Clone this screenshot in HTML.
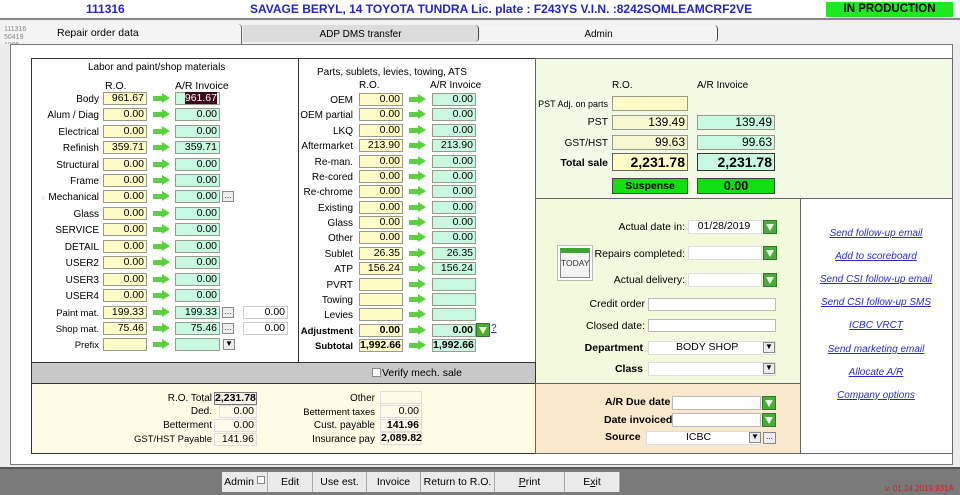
<!DOCTYPE html>
<html><head><meta charset="utf-8">
<style>
*{box-sizing:border-box;margin:0;padding:0}
body{width:960px;height:495px;overflow:hidden;background:#fff;font-family:"Liberation Sans",Arial,sans-serif;font-size:10px;color:#000;position:relative}
.a{position:absolute}
.l{position:absolute;text-align:right;white-space:nowrap;font-size:10px;line-height:13px;padding-top:1px}
.i{position:absolute;height:13px;border:1px solid #9a9a8a;font-size:10.5px;line-height:11px;text-align:right;padding-right:2px;white-space:nowrap}
.y{background:#fffcc8}
.g{background:#c8f8e0}
.w{background:#fff}
.ar{position:absolute;width:18px;height:11px}
.ar:before{content:"";position:absolute;left:0;top:3px;width:9px;height:5px;background:#5bd040}
.ar:after{content:"";position:absolute;left:9px;top:0;border-left:8px solid #5bd040;border-top:5.5px solid transparent;border-bottom:5.5px solid transparent}
.dd{position:absolute;width:14px;height:14px;background:#4caa3c;border:1px solid #2e7a24}
.dd:after{content:"";position:absolute;left:2px;top:3px;border-top:7px solid #e8ffe0;border-left:4px solid transparent;border-right:4px solid transparent}
.sb{position:absolute;width:12px;height:11px;background:#eee;border:1px solid #888;font-size:8px;line-height:8px;text-align:center}
.lk{position:absolute;left:800px;width:152px;text-align:center;color:#2a2ac8;text-decoration:underline;font-style:italic;font-size:10px}
.bt{position:absolute;top:472px;height:20px;background:#eaeaea;border-right:1px solid #aaa;font-size:10.5px;line-height:20px;text-align:center}
b{font-weight:bold}
</style></head><body>
<!-- header -->
<div class="a" style="left:0;top:0;width:960px;height:20px;background:#fff;border-bottom:2px solid #888"></div>
<div class="a" style="left:86px;top:2px;font-size:12px;font-weight:bold;color:#2424c8">111316</div>
<div class="a" style="left:250px;top:2px;font-size:12px;font-weight:bold;color:#2424c8;white-space:nowrap">SAVAGE BERYL, 14 TOYOTA TUNDRA Lic. plate : F243YS V.I.N. :8242SOMLEAMCRF2VE</div>
<div class="a" style="left:826px;top:2px;width:127px;height:15px;background:#1ee81e;text-align:center;font-size:11.5px;font-weight:bold;line-height:15px">IN PRODUCTION</div>
<!-- tabs -->
<div class="a" style="left:0;top:20px;width:960px;height:24px;background:#f0f0f0"></div>
<div class="a" style="left:2px;top:24px;width:240px;height:22px;background:#f4f4f4;border-right:1px solid #666;border-radius:0 4px 0 0"></div>
<div class="a" style="left:243px;top:25px;width:236px;height:17px;background:#dcdcdc;border-right:1px solid #444;border-radius:0 4px 4px 0;text-align:center;font-size:10px;line-height:17px;padding-top:1px">ADP DMS transfer</div>
<div class="a" style="left:480px;top:25px;width:238px;height:17px;background:#f4f4f4;border-right:1px solid #444;border-radius:0 4px 4px 0;text-align:center;font-size:10px;line-height:17px;padding-top:1px">Admin</div>
<div class="a" style="left:57px;top:27px;font-size:10.5px">Repair order data</div>
<div class="a" style="left:4px;top:26px;font-size:7px;line-height:8px;color:#888">111316<br>50419<br>1905</div>
<!-- main frame -->
<div class="a" style="left:0;top:44px;width:960px;height:423px;background:#ececec"></div>
<div class="a" style="left:10px;top:44px;width:943px;height:421px;background:#fff;border:1px solid #777"></div>
<!-- section boxes -->
<div class="a" style="left:31px;top:58px;width:268px;height:305px;border:1px solid #333;background:#fff"></div>
<div class="a" style="left:298px;top:58px;width:238px;height:305px;border:1px solid #333;background:#fff"></div>
<div class="a" style="left:535px;top:58px;width:418px;height:141px;border:1px solid #666;background:#f2f9e4"></div>
<div class="a" style="left:535px;top:198px;width:266px;height:186px;border:1px solid #666;background:#f2f9dc"></div>
<div class="a" style="left:800px;top:198px;width:153px;height:256px;border:1px solid #666;background:#fff"></div>
<div class="a" style="left:31px;top:362px;width:505px;height:22px;border:1px solid #333;background:#c8c8c8"></div>
<div class="a" style="left:31px;top:383px;width:505px;height:71px;border:1px solid #333;background:#fffbe4"></div>
<div class="a" style="left:535px;top:383px;width:266px;height:71px;border:1px solid #666;background:#fae8cc"></div>

<!-- left section -->
<div class="a" style="left:88px;top:62px;font-size:10px">Labor and paint/shop materials</div>
<div class="a" style="left:105px;top:80px;font-size:10.5px">R.O.</div>
<div class="a" style="left:175px;top:80px;font-size:10.5px">A/R Invoice</div>

<div class="l" style="left:20px;width:79px;top:92px">Body</div><div class="i y" style="left:103px;top:92px;width:44px">961.67</div><div class="ar" style="left:153px;top:93px"></div><div class="i g" style="left:175px;top:92px;width:45px"><span style="background:#3a0a1a;color:#fff">961.67</span></div>
<div class="l" style="left:20px;width:79px;top:108px">Alum / Diag</div><div class="i y" style="left:103px;top:108px;width:44px">0.00</div><div class="ar" style="left:153px;top:109px"></div><div class="i g" style="left:175px;top:108px;width:45px">0.00</div>
<div class="l" style="left:20px;width:79px;top:125px">Electrical</div><div class="i y" style="left:103px;top:125px;width:44px">0.00</div><div class="ar" style="left:153px;top:126px"></div><div class="i g" style="left:175px;top:125px;width:45px">0.00</div>
<div class="l" style="left:20px;width:79px;top:141px">Refinish</div><div class="i y" style="left:103px;top:141px;width:44px">359.71</div><div class="ar" style="left:153px;top:142px"></div><div class="i g" style="left:175px;top:141px;width:45px">359.71</div>
<div class="l" style="left:20px;width:79px;top:158px">Structural</div><div class="i y" style="left:103px;top:158px;width:44px">0.00</div><div class="ar" style="left:153px;top:159px"></div><div class="i g" style="left:175px;top:158px;width:45px">0.00</div>
<div class="l" style="left:20px;width:79px;top:174px">Frame</div><div class="i y" style="left:103px;top:174px;width:44px">0.00</div><div class="ar" style="left:153px;top:175px"></div><div class="i g" style="left:175px;top:174px;width:45px">0.00</div>
<div class="l" style="left:20px;width:79px;top:190px"><span style="color:#aaa;font-size:7px">&#9675;</span> Mechanical</div><div class="i y" style="left:103px;top:190px;width:44px">0.00</div><div class="ar" style="left:153px;top:191px"></div><div class="i g" style="left:175px;top:190px;width:45px">0.00</div><div class="sb" style="left:222px;top:191px">...</div>
<div class="l" style="left:20px;width:79px;top:207px">Glass</div><div class="i y" style="left:103px;top:207px;width:44px">0.00</div><div class="ar" style="left:153px;top:208px"></div><div class="i g" style="left:175px;top:207px;width:45px">0.00</div>
<div class="l" style="left:20px;width:79px;top:223px">SERVICE</div><div class="i y" style="left:103px;top:223px;width:44px">0.00</div><div class="ar" style="left:153px;top:224px"></div><div class="i g" style="left:175px;top:223px;width:45px">0.00</div>
<div class="l" style="left:20px;width:79px;top:240px">DETAIL</div><div class="i y" style="left:103px;top:240px;width:44px">0.00</div><div class="ar" style="left:153px;top:241px"></div><div class="i g" style="left:175px;top:240px;width:45px">0.00</div>
<div class="l" style="left:20px;width:79px;top:256px">USER2</div><div class="i y" style="left:103px;top:256px;width:44px">0.00</div><div class="ar" style="left:153px;top:257px"></div><div class="i g" style="left:175px;top:256px;width:45px">0.00</div>
<div class="l" style="left:20px;width:79px;top:273px">USER3</div><div class="i y" style="left:103px;top:273px;width:44px">0.00</div><div class="ar" style="left:153px;top:274px"></div><div class="i g" style="left:175px;top:273px;width:45px">0.00</div>
<div class="l" style="left:20px;width:79px;top:289px">USER4</div><div class="i y" style="left:103px;top:289px;width:44px">0.00</div><div class="ar" style="left:153px;top:290px"></div><div class="i g" style="left:175px;top:289px;width:45px">0.00</div>
<div class="l" style="left:20px;width:79px;top:306px;font-size:9.5px">Paint mat.</div><div class="i y" style="left:103px;top:306px;width:44px">199.33</div><div class="ar" style="left:153px;top:307px"></div><div class="i g" style="left:175px;top:306px;width:45px">199.33</div><div class="sb" style="left:222px;top:307px">...</div><div class="i w" style="left:243px;top:306px;width:45px;border-color:#ccc">0.00</div>
<div class="l" style="left:20px;width:79px;top:322px;font-size:9.5px">Shop mat.</div><div class="i y" style="left:103px;top:322px;width:44px">75.46</div><div class="ar" style="left:153px;top:323px"></div><div class="i g" style="left:175px;top:322px;width:45px">75.46</div><div class="sb" style="left:222px;top:323px">...</div><div class="i w" style="left:243px;top:322px;width:45px;border-color:#ccc">0.00</div>
<div class="l" style="left:20px;width:79px;top:338px;font-size:9.5px">Prefix</div><div class="i y" style="left:103px;top:338px;width:44px"></div><div class="ar" style="left:153px;top:339px"></div><div class="i g" style="left:175px;top:338px;width:45px"></div><div class="sb" style="left:223px;top:339px">&#9660;</div>

<!-- middle section -->
<div class="a" style="left:317px;top:67px;font-size:10px">Parts, sublets, levies, towing, ATS</div>
<div class="a" style="left:359px;top:80px;font-size:10px">R.O.</div>
<div class="a" style="left:430px;top:80px;font-size:10px">A/R Invoice</div>

<div class="l" style="left:290px;width:63px;top:93px">OEM</div><div class="i y" style="left:359px;top:93px;width:44px">0.00</div><div class="ar" style="left:409px;top:94px"></div><div class="i g" style="left:432px;top:93px;width:44px">0.00</div>
<div class="l" style="left:290px;width:63px;top:108px">OEM partial</div><div class="i y" style="left:359px;top:108px;width:44px">0.00</div><div class="ar" style="left:409px;top:109px"></div><div class="i g" style="left:432px;top:108px;width:44px">0.00</div>
<div class="l" style="left:290px;width:63px;top:124px">LKQ</div><div class="i y" style="left:359px;top:124px;width:44px">0.00</div><div class="ar" style="left:409px;top:125px"></div><div class="i g" style="left:432px;top:124px;width:44px">0.00</div>
<div class="l" style="left:290px;width:63px;top:139px">Aftermarket</div><div class="i y" style="left:359px;top:139px;width:44px">213.90</div><div class="ar" style="left:409px;top:140px"></div><div class="i g" style="left:432px;top:139px;width:44px">213.90</div>
<div class="l" style="left:290px;width:63px;top:155px">Re-man.</div><div class="i y" style="left:359px;top:155px;width:44px">0.00</div><div class="ar" style="left:409px;top:156px"></div><div class="i g" style="left:432px;top:155px;width:44px">0.00</div>
<div class="l" style="left:290px;width:63px;top:170px">Re-cored</div><div class="i y" style="left:359px;top:170px;width:44px">0.00</div><div class="ar" style="left:409px;top:171px"></div><div class="i g" style="left:432px;top:170px;width:44px">0.00</div>
<div class="l" style="left:290px;width:63px;top:185px">Re-chrome</div><div class="i y" style="left:359px;top:185px;width:44px">0.00</div><div class="ar" style="left:409px;top:186px"></div><div class="i g" style="left:432px;top:185px;width:44px">0.00</div>
<div class="l" style="left:290px;width:63px;top:201px">Existing</div><div class="i y" style="left:359px;top:201px;width:44px">0.00</div><div class="ar" style="left:409px;top:202px"></div><div class="i g" style="left:432px;top:201px;width:44px">0.00</div>
<div class="l" style="left:290px;width:63px;top:216px">Glass</div><div class="i y" style="left:359px;top:216px;width:44px">0.00</div><div class="ar" style="left:409px;top:217px"></div><div class="i g" style="left:432px;top:216px;width:44px">0.00</div>
<div class="l" style="left:290px;width:63px;top:231px">Other</div><div class="i y" style="left:359px;top:231px;width:44px">0.00</div><div class="ar" style="left:409px;top:232px"></div><div class="i g" style="left:432px;top:231px;width:44px">0.00</div>
<div class="l" style="left:290px;width:63px;top:247px">Sublet</div><div class="i y" style="left:359px;top:247px;width:44px">26.35</div><div class="ar" style="left:409px;top:248px"></div><div class="i g" style="left:432px;top:247px;width:44px">26.35</div>
<div class="l" style="left:290px;width:63px;top:262px">ATP</div><div class="i y" style="left:359px;top:262px;width:44px">156.24</div><div class="ar" style="left:409px;top:263px"></div><div class="i g" style="left:432px;top:262px;width:44px">156.24</div>
<div class="l" style="left:290px;width:63px;top:278px">PVRT</div><div class="i y" style="left:359px;top:278px;width:44px"></div><div class="ar" style="left:409px;top:279px"></div><div class="i g" style="left:432px;top:278px;width:44px"></div>
<div class="l" style="left:290px;width:63px;top:293px">Towing</div><div class="i y" style="left:359px;top:293px;width:44px"></div><div class="ar" style="left:409px;top:294px"></div><div class="i g" style="left:432px;top:293px;width:44px"></div>
<div class="l" style="left:290px;width:63px;top:308px">Levies</div><div class="i y" style="left:359px;top:308px;width:44px"></div><div class="ar" style="left:409px;top:309px"></div><div class="i g" style="left:432px;top:308px;width:44px"></div>
<div class="l" style="left:290px;width:63px;top:324px;font-weight:bold;font-size:9.5px">Adjustment</div><div class="i y" style="left:359px;top:324px;width:44px;font-weight:bold">0.00</div><div class="ar" style="left:409px;top:325px"></div><div class="i g" style="left:432px;top:324px;width:44px;font-weight:bold">0.00</div><div class="dd" style="left:476px;top:323px"></div><div class="a" style="left:491px;top:323px;color:#2a2ac8;text-decoration:underline;font-size:10px">?</div>
<div class="l" style="left:290px;width:63px;top:339px;font-weight:bold;font-size:9.5px">Subtotal</div><div class="i y" style="left:359px;top:339px;width:44px;font-weight:bold">1,992.66</div><div class="ar" style="left:409px;top:340px"></div><div class="i g" style="left:432px;top:339px;width:44px;font-weight:bold">1,992.66</div>

<!-- right top -->
<div class="a" style="left:612px;top:80px;font-size:10px">R.O.</div>
<div class="a" style="left:697px;top:80px;font-size:10px">A/R Invoice</div>
<div class="l" style="left:536px;width:72px;top:97px;font-size:9px">PST Adj. on parts</div><div class="i y" style="left:612px;top:96px;width:76px;height:15px"></div>
<div class="l" style="left:536px;width:72px;top:115px;font-size:10.5px">PST</div><div class="i" style="left:612px;top:115px;width:76px;height:15px;background:#f6f8d0;font-size:12px;line-height:13px">139.49</div><div class="i g" style="left:697px;top:115px;width:78px;height:15px;font-size:12px;line-height:13px">139.49</div>
<div class="l" style="left:536px;width:72px;top:136px;font-size:10px">GST/HST</div><div class="i" style="left:612px;top:135px;width:76px;height:15px;background:#f6f8d0;font-size:12px;line-height:13px">99.63</div><div class="i g" style="left:697px;top:135px;width:78px;height:15px;font-size:12px;line-height:13px">99.63</div>
<div class="l" style="left:536px;width:72px;top:156px;font-size:10.5px;font-weight:bold">Total sale</div><div class="i y" style="left:612px;top:153px;width:76px;height:18px;font-size:14px;line-height:16px;font-weight:bold;border-color:#666">2,231.78</div><div class="i g" style="left:697px;top:153px;width:78px;height:18px;font-size:14px;line-height:16px;font-weight:bold;border-color:#333">2,231.78</div>
<div class="a" style="left:612px;top:178px;width:76px;height:16px;background:#10e010;border:1px solid #444;text-align:center;font-weight:bold;font-size:10.5px;line-height:14px">Suspense</div>
<div class="a" style="left:697px;top:178px;width:78px;height:16px;background:#10e010;border:1px solid #444;text-align:center;font-weight:bold;font-size:12.5px;line-height:14px">0.00</div>

<!-- middle green -->
<div class="l" style="left:600px;width:85px;top:220px;font-size:10.5px">Actual date in:</div><div class="i w" style="left:688px;top:220px;width:74px;height:14px;border-color:#ddd;text-align:center;font-size:10.5px">01/28/2019</div><div class="dd" style="left:763px;top:220px"></div>
<div class="l" style="left:580px;width:105px;top:247px;font-size:10.5px">Repairs completed:</div><div class="i w" style="left:688px;top:246px;width:74px;height:14px;border-color:#ddd"></div><div class="dd" style="left:763px;top:246px"></div>
<div class="l" style="left:600px;width:85px;top:273px;font-size:10.5px">Actual delivery:</div><div class="i w" style="left:688px;top:273px;width:74px;height:14px;border-color:#ddd"></div><div class="dd" style="left:763px;top:273px"></div>
<div class="a" style="left:557px;top:245px;width:36px;height:36px;background:#fff;border:1px solid #bbb"></div>
<div class="a" style="left:560px;top:248px;width:30px;height:30px;background:#f4f4f4;border:1px solid #888;border-top:5px solid #3aa830;font-size:8.5px;text-align:center;line-height:20px;color:#333">TODAY</div>
<div class="l" style="left:560px;width:85px;top:297px;font-size:10.5px">Credit order</div><div class="i w" style="left:648px;top:298px;width:128px;height:13px;border-color:#bbb"></div>
<div class="l" style="left:560px;width:85px;top:319px;font-size:10.5px">Closed date:</div><div class="i w" style="left:648px;top:319px;width:128px;height:13px;border-color:#bbb"></div>
<div class="l" style="left:560px;width:83px;top:341px;font-size:10.5px;font-weight:bold">Department</div><div class="i w" style="left:648px;top:341px;width:128px;height:14px;border-color:#ddd;text-align:left;padding-left:27px;font-size:10.5px">BODY SHOP</div><div class="sb" style="left:763px;top:342px;width:12px;height:11px">&#9660;</div>
<div class="l" style="left:560px;width:83px;top:362px;font-size:10.5px;font-weight:bold">Class</div><div class="i w" style="left:648px;top:362px;width:128px;height:14px;border-color:#ddd"></div><div class="sb" style="left:763px;top:363px;width:12px;height:11px">&#9660;</div>

<!-- links -->
<div class="lk" style="top:228px">Send follow-up email</div>
<div class="lk" style="top:251px">Add to scoreboard</div>
<div class="lk" style="top:274px">Send CSI follow-up email</div>
<div class="lk" style="top:297px">Send CSI follow-up SMS</div>
<div class="lk" style="top:320px">ICBC VRCT</div>
<div class="lk" style="top:344px">Send marketing email</div>
<div class="lk" style="top:367px">Allocate A/R</div>
<div class="lk" style="top:390px">Company options</div>

<!-- gray band -->
<div class="a" style="left:372px;top:368px;width:9px;height:9px;background:#fff;border:1px solid #888"></div>
<div class="a" style="left:382px;top:367px;font-size:10.5px">Verify mech. sale</div>

<!-- bottom yellow -->
<div class="l" style="left:120px;width:92px;top:391px;font-size:10px">R.O. Total</div><div class="i" style="left:214px;top:392px;width:43px;background:#f6f4e8;border-color:#777;font-weight:bold">2,231.78</div>
<div class="l" style="left:120px;width:92px;top:404px;font-size:10px">Ded.</div><div class="i" style="left:219px;top:405px;width:38px;background:#fffbe8;border-color:#ddd">0.00</div>
<div class="l" style="left:120px;width:92px;top:418px;font-size:10px">Betterment</div><div class="i" style="left:214px;top:419px;width:43px;background:#fffbe8;border-color:#ddd">0.00</div>
<div class="l" style="left:120px;width:92px;top:432px;font-size:9.5px">GST/HST Payable</div><div class="i" style="left:214px;top:433px;width:43px;background:#fffbe8;border-color:#ddd">141.96</div>
<div class="l" style="left:290px;width:85px;top:391px;font-size:10px">Other</div><div class="i" style="left:380px;top:391px;width:42px;background:#fffbe8;border-color:#ddd"></div>
<div class="l" style="left:290px;width:85px;top:405px;font-size:9.5px">Betterment taxes</div><div class="i" style="left:380px;top:405px;width:42px;background:#fffbe8;border-color:#ddd">0.00</div>
<div class="l" style="left:290px;width:85px;top:418px;font-size:10px">Cust. payable</div><div class="i" style="left:380px;top:419px;width:42px;background:#fffbe8;border-color:#ddd;font-weight:bold">141.96</div>
<div class="l" style="left:290px;width:85px;top:432px;font-size:10px">Insurance pay</div><div class="i" style="left:380px;top:432px;width:42px;background:#fffbe8;border-color:#ddd;font-weight:bold">2,089.82</div>

<!-- orange -->
<div class="a" style="left:605px;top:396px;font-size:10.5px;font-weight:bold">A/R Due date</div><div class="i w" style="left:672px;top:396px;width:89px;height:14px;border-color:#bbb"></div><div class="dd" style="left:762px;top:396px"></div>
<div class="a" style="left:604px;top:414px;font-size:10.5px;font-weight:bold">Date invoiced</div><div class="i w" style="left:672px;top:413px;width:89px;height:14px;border-color:#bbb"></div><div class="dd" style="left:762px;top:413px"></div>
<div class="a" style="left:605px;top:431px;font-size:10.5px;font-weight:bold">Source</div><div class="i w" style="left:646px;top:431px;width:115px;height:14px;border-color:#ddd;text-align:left;padding-left:39px;font-size:10.5px">ICBC</div><div class="sb" style="left:749px;top:432px">&#9660;</div><div class="sb" style="left:763px;top:432px;width:13px;height:12px">...</div>

<!-- bottom bar -->
<div class="a" style="left:0;top:467px;width:960px;height:28px;background:#7a7a7a;border-top:2px solid #555"></div>
<div class="bt" style="left:222px;width:46px">Admin <span style="display:inline-block;width:8px;height:8px;border:1px solid #888;background:#fff;vertical-align:top;margin-top:4px"></span></div>
<div class="bt" style="left:268px;width:45px">Edit</div>
<div class="bt" style="left:313px;width:54px">Use est.</div>
<div class="bt" style="left:367px;width:54px">Invoice</div>
<div class="bt" style="left:421px;width:74px">Return to R.O.</div>
<div class="bt" style="left:495px;width:70px"><u>P</u>rint</div>
<div class="bt" style="left:565px;width:55px">E<u>x</u>it</div>
<div class="a" style="left:885px;top:484px;font-size:8px;color:#d02020">v. 01.24.2019.931A</div>
</body></html>
